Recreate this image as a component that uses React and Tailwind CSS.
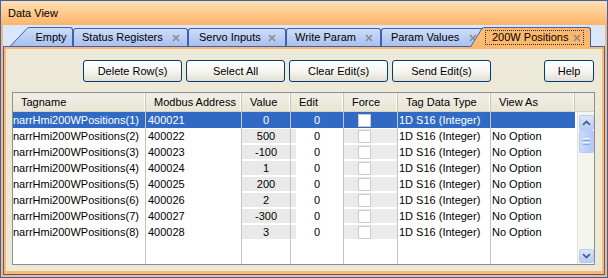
import React from 'react';

const ROWS = [
  { addr: '400021', value: '0', view: '' },
  { addr: '400022', value: '500', view: 'No Option' },
  { addr: '400023', value: '-100', view: 'No Option' },
  { addr: '400024', value: '1', view: 'No Option' },
  { addr: '400025', value: '200', view: 'No Option' },
  { addr: '400026', value: '2', view: 'No Option' },
  { addr: '400027', value: '-300', view: 'No Option' },
  { addr: '400028', value: '3', view: 'No Option' },
];

const COLS = [
  { label: 'Tagname', w: 'w-[133px]' },
  { label: 'Modbus Address', w: 'w-[96px]' },
  { label: 'Value', w: 'w-[49px]' },
  { label: 'Edit', w: 'w-[53px]' },
  { label: 'Force', w: 'w-[54px]' },
  { label: 'Tag Data Type', w: 'w-[93px]' },
  { label: 'View As', w: 'w-[84px]' },
];

function CloseX() {
  return (
    <svg width="8" height="8" viewBox="0 0 8 8" className="shrink-0">
      <path d="M1 1 L7 7 M7 1 L1 7" stroke="#8a8a8a" strokeWidth="1.6" />
    </svg>
  );
}

function Wedge({ w, h, from, to, id }) {
  return (
    <svg width={w} height={h} viewBox={`0 0 ${w} ${h}`} className="shrink-0 block">
      <defs>
        <linearGradient id={id} x1="0" y1="0" x2="0" y2="1">
          <stop offset="0" stopColor={from} />
          <stop offset="1" stopColor={to} />
        </linearGradient>
      </defs>
      <path d={`M0 ${h} L${w - 3} 1.5 Q${w - 1.5} 0.5 ${w} 0.5 L${w} ${h} Z`} fill={`url(#${id})`} />
      <path d={`M0.5 ${h} L${w - 3} 1.5 Q${w - 1.5} 0.5 ${w} 0.5`} stroke="#3f5fb0" fill="none" />
    </svg>
  );
}

function Tab({ label, w, pl, pr }) {
  return (
    <div className={`${w} ${pl} ${pr} h-[18px] flex items-center justify-between border-t border-x border-[#3f5fb0] rounded-t-[3px] bg-gradient-to-b from-[#cddcf9] to-[#a9c1f0]`}>
      <span>{label}</span>
      <CloseX />
    </div>
  );
}

function XpButton({ children, w }) {
  return (
    <button className={`${w} h-[22px] border border-[#003c74] rounded-[3px] bg-gradient-to-b from-white via-[#f6f6f2] to-[#e2dfd4] text-[11px] text-black leading-none`}>
      {children}
    </button>
  );
}

function ScrollButton({ down, h }) {
  return (
    <div className={`w-[15px] ${h} rounded-[2px] border border-[#b8cbf3] bg-gradient-to-b from-[#dbe6fd] to-[#b7cbf7] flex items-center justify-center`}>
      <svg width="9" height="6" viewBox="0 0 9 6">
        <path d={down ? 'M1 1.2 L4.5 4.5 L8 1.2' : 'M1 4.8 L4.5 1.5 L8 4.8'} stroke="#4d6185" strokeWidth="1.8" fill="none" />
      </svg>
    </div>
  );
}

function Row({ r, i, selected }) {
  const text = selected ? 'text-white' : 'text-black';
  const line = 'border-r border-[#c4c4c4]';
  return (
    <div className={`h-[16px] flex ${selected ? 'bg-[#316ac5]' : ''} ${text}`}>
      <div className={`w-[133px] ${line} flex items-center whitespace-nowrap overflow-hidden`}>narrHmi200WPositions({i + 1})</div>
      <div className={`w-[96px] ${line} flex items-center pl-[2px]`}>{r.addr}</div>
      <div className={`w-[49px] ${line} py-[1px]`}>
        <div className={`h-full flex items-center justify-center ${selected ? '' : 'bg-[#e9e9e9]'}`}>{r.value}</div>
      </div>
      <div className={`w-[53px] ${line} flex py-[1px]`}>
        {!selected && <div className="w-[5px] h-full bg-[#e9e9e9]" />}
        <div className={`flex-1 flex items-center justify-center ${selected ? '' : '-ml-[5px]'}`}>0</div>
      </div>
      <div className={`w-[54px] ${line} py-[1px]`}>
        <div className={`h-full flex items-center pl-[14px] ${selected ? '' : 'bg-[#ebebeb]'}`}>
          <div className="w-[13px] h-[13px] bg-white border border-[#cdcbc2]" />
        </div>
      </div>
      <div className={`w-[93px] ${line} flex items-center pl-[1px] whitespace-nowrap`}>1D S16 (Integer)</div>
      <div className="w-[84px] flex items-center pl-[1px] whitespace-nowrap">{r.view}</div>
    </div>
  );
}

export default function App() {
  return (
    <div className="w-[608px] h-[278px] border border-[#3f5fb0] bg-[#fcb86c] flex flex-col px-[2px] pb-[2px] font-['Liberation_Sans',Arial,sans-serif] text-[11px] text-black overflow-hidden">
      <div className="h-[24px] -mx-[2px] px-[7px] flex items-center bg-gradient-to-b from-[#ffe0b2] to-[#fcb467]">Data View</div>

      <div className="flex-1 flex flex-col bg-[#dae6fa]">
        <div className="h-[21px] flex items-end pl-[7px]">
          <div className="flex items-end">
            <Wedge w={20} h={19} from="#cddcf9" to="#a9c1f0" id="g1" />
            <div className="w-[43px] h-[19px] flex items-center justify-center border-t border-r border-[#3f5fb0] rounded-tr-[3px] bg-gradient-to-b from-[#cddcf9] to-[#a9c1f0]">Empty</div>
          </div>
          <Tab label="Status Registers" w="w-[115px]" pl="pl-[8px]" pr="pr-[7px]" />
          <Tab label="Servo Inputs" w="w-[98px]" pl="pl-[10px]" pr="pr-[9px]" />
          <Tab label="Write Param" w="w-[95px]" pl="pl-[8px]" pr="pr-[7px]" />
          <div className="w-[104px] h-[18px] flex items-center pl-[9px] border-t border-l border-[#3f5fb0] rounded-tl-[3px] bg-gradient-to-b from-[#cddcf9] to-[#a9c1f0]">
            <span>Param Values</span>
            <span className="ml-[10px]"><CloseX /></span>
          </div>
          <div className="relative z-10 -ml-[15px] -mb-[1px] flex items-end">
            <Wedge w={15} h={20} from="#fdc27e" to="#fcb86c" id="g2" />
            <div className="w-[106px] h-[20px] pt-[1px] border-t border-r border-[#3f5fb0] rounded-tr-[3px] bg-[#fcb86c]">
              <div className="w-[99px] h-[15px] mt-[1px] border border-dotted border-[#333] flex items-center justify-between pl-[6px] pr-[2px]">
                <span>200W Positions</span>
                <CloseX />
              </div>
            </div>
          </div>
        </div>

        <div className="flex-1 border border-[#3f5fb0]">
          <div className="h-full border-2 border-b-[3px] border-[#fcb86c] bg-[#ece9d8] flex flex-col">
            <div className="flex items-center pt-[11px] pl-[77px] pr-[8px] gap-[4px]">
              <XpButton w="w-[99px]">Delete Row(s)</XpButton>
              <XpButton w="w-[99px]">Select All</XpButton>
              <XpButton w="w-[99px]">Clear Edit(s)</XpButton>
              <XpButton w="w-[99px]">Send Edit(s)</XpButton>
              <div className="ml-auto"><XpButton w="w-[50px]">Help</XpButton></div>
            </div>

            <div className="mt-[10px] ml-[6px] w-[583px] h-[173px] border border-[#8e8e8e] bg-white flex flex-col">
              <div className="h-[19px] flex bg-gradient-to-b from-[#f1efe6] to-[#e8e5d6] border-b border-[#d6d2c3]">
                {COLS.map((c) => (
                  <div key={c.label} className={`${c.w} flex items-center pl-[8px] border-r border-[#c9c5b4] shadow-[inset_-1px_0_0_#ffffff]`}>{c.label}</div>
                ))}
              </div>
              <div className="flex-1 flex">
                <div className="w-[562px] flex flex-col">
                  {ROWS.map((r, i) => (
                    <Row key={r.addr} r={r} i={i} selected={i === 0} />
                  ))}
                  <div className="flex-1 flex">
                    <div className="w-[133px] border-r border-[#c4c4c4]" />
                    <div className="w-[96px] border-r border-[#c4c4c4]" />
                    <div className="w-[49px] border-r border-[#c4c4c4]" />
                    <div className="w-[53px] border-r border-[#c4c4c4]" />
                    <div className="w-[54px] border-r border-[#c4c4c4]" />
                    <div className="w-[93px] border-r border-[#c4c4c4]" />
                    <div className="w-[84px]" />
                  </div>
                </div>
                <div className="w-[2px]" />
                <div className="w-[17px] flex flex-col items-center pt-[3px] pb-[1px] bg-[#f5f4ef] border-l border-[#e4e2da]">
                  <ScrollButton h="h-[15px]" />
                  <div className="w-[15px] h-[23px] rounded-[2px] border border-[#b8cbf3] bg-gradient-to-r from-[#c9d8fc] to-[#b4c8f6] flex flex-col items-center justify-center gap-[1px]">
                    <div className="w-[7px] h-[1px] bg-[#eef3fe]" />
                    <div className="w-[7px] h-[1px] bg-[#8ca7e0]" />
                    <div className="w-[7px] h-[1px] bg-[#eef3fe]" />
                    <div className="w-[7px] h-[1px] bg-[#8ca7e0]" />
                  </div>
                  <div className="flex-1" />
                  <ScrollButton down h="h-[14px]" />
                </div>
              </div>
            </div>
          </div>
        </div>
      </div>
    </div>
  );
}
